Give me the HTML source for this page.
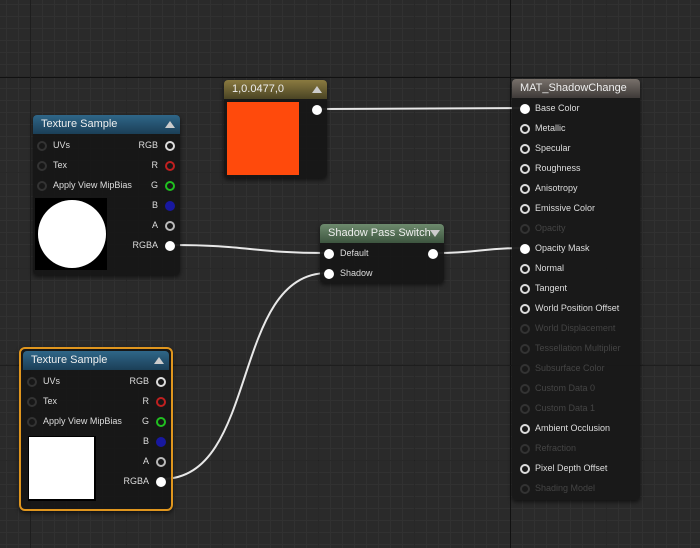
<!DOCTYPE html>
<html><head><style>
body{margin:0;width:700px;height:548px;overflow:hidden;background:#2a2a2a;font-family:"Liberation Sans",sans-serif;position:relative}
.grid{position:absolute;inset:0;background:
linear-gradient(90deg,rgba(0,0,0,.18) 1px,transparent 1px) 30px 0/96px 100%,
linear-gradient(0deg,rgba(0,0,0,.18) 1px,transparent 1px) 0 77px/100% 96px,
linear-gradient(90deg,#313131 1px,transparent 1px) 6px 0/12px 100%,
linear-gradient(0deg,#313131 1px,transparent 1px) 0 5px/100% 12px,#2a2a2a}
.vl{position:absolute;top:0;bottom:0;width:1px;background:#111}
.hl{position:absolute;left:0;right:0;height:1px;background:#111}
.node{position:absolute;background:rgba(22,22,22,.94);border-radius:4px;box-shadow:0 2px 4px rgba(0,0,0,.6)}
.hd{position:absolute;left:0;right:0;top:0;height:19px;border-radius:4px 4px 0 0;color:#eee;font-size:11px;line-height:19px;padding-left:8px}
.tri{position:absolute;right:5px;top:6px;width:0;height:0;border-left:5px solid transparent;border-right:5px solid transparent;border-bottom:7px solid #ccc}
.row{position:absolute;font-size:9px;color:#ddd;line-height:12px;white-space:nowrap}
.dim{color:#444}
.pin{position:absolute;width:6px;height:6px;border-radius:50%;border:2px solid #ddd}
.pf{background:#fff;border-color:#fff}
svg{position:absolute;left:0;top:0}
</style></head><body>
<div class="grid"></div>
<div class="vl" style="left:510px"></div>
<div class="hl" style="top:77px"></div>
<div class="vl" style="left:30px;background:#1e1e1e"></div>
<div class="hl" style="top:365px;background:#1e1e1e"></div>

<svg width="700" height="548"><g fill="none" stroke="#e8e8e8" stroke-width="2">
<path d="M320 109 L522 108"/>
<path d="M172 245 C250 245 250 253 328 253"/>
<path d="M436 253 C480 253 480 248 524 248"/>
<path d="M162 479 C260 479 230 273 328 273"/>
</g></svg>

<div class="node" style="left:33px;top:115px;width:147px;height:160px">
<div class="hd" style="background:linear-gradient(#2f6688,#1b3f57)">Texture Sample</div><div class="tri"></div>
<div class="row" style="left:20px;top:24px">UVs</div>
<div class="row" style="left:20px;top:44px">Tex</div>
<div class="row" style="left:20px;top:64px">Apply View MipBias</div>
<div class="pin" style="left:4px;top:26px;border-color:#333"></div>
<div class="pin" style="left:4px;top:46px;border-color:#333"></div>
<div class="pin" style="left:4px;top:66px;border-color:#333"></div>
<div class="row" style="right:22px;top:24px">RGB</div><div class="pin" style="right:5px;top:26px"></div>
<div class="row" style="right:22px;top:44px">R</div><div class="pin" style="right:5px;top:46px;border-color:#c02020"></div>
<div class="row" style="right:22px;top:64px">G</div><div class="pin" style="right:5px;top:66px;border-color:#20c020"></div>
<div class="row" style="right:22px;top:84px">B</div><div class="pin" style="right:5px;top:86px;border-color:#1818a0;background:#1818a0"></div>
<div class="row" style="right:22px;top:104px">A</div><div class="pin" style="right:5px;top:106px;border-color:#bbb"></div>
<div class="row" style="right:22px;top:124px">RGBA</div><div class="pin pf" style="right:5px;top:126px"></div>
<div style="position:absolute;left:2px;top:83px;width:72px;height:72px;background:#000"><div style="position:absolute;left:3px;top:2px;width:68px;height:68px;border-radius:50%;background:#fff"></div></div>
</div>

<div class="node" style="left:224px;top:80px;width:103px;height:98px">
<div class="hd" style="background:linear-gradient(#8a7a40,#4a4424)">1,0.0477,0</div><div class="tri"></div>
<div style="position:absolute;left:3px;top:22px;width:72px;height:73px;background:#ff4a0c"></div>
<div class="pin pf" style="right:5px;top:25px"></div>
</div>

<div class="node" style="left:320px;top:224px;width:124px;height:59px">
<div class="hd" style="background:linear-gradient(#6d8a6d,#3d553f)">Shadow Pass Switch</div>
<div style="position:absolute;right:4px;top:6px;border-left:5px solid transparent;border-right:5px solid transparent;border-top:7px solid #ccc"></div>
<div class="pin pf" style="left:4px;top:25px"></div><div class="row" style="left:20px;top:23px">Default</div>
<div class="pin pf" style="left:4px;top:45px"></div><div class="row" style="left:20px;top:43px">Shadow</div>
<div class="pin pf" style="right:6px;top:25px"></div>
</div>

<div class="node" style="left:512px;top:79px;width:128px;height:421px;background:rgba(24,24,24,.95)">
<div class="hd" style="background:linear-gradient(#77706a,#3e3a38)">MAT_ShadowChange</div>
<div class="pin pf" style="left:8px;top:25px"></div><div class="row" style="left:23px;top:23px">Base Color</div>
<div class="pin" style="left:8px;top:45px"></div><div class="row" style="left:23px;top:43px">Metallic</div>
<div class="pin" style="left:8px;top:65px"></div><div class="row" style="left:23px;top:63px">Specular</div>
<div class="pin" style="left:8px;top:85px"></div><div class="row" style="left:23px;top:83px">Roughness</div>
<div class="pin" style="left:8px;top:105px"></div><div class="row" style="left:23px;top:103px">Anisotropy</div>
<div class="pin" style="left:8px;top:125px"></div><div class="row" style="left:23px;top:123px">Emissive Color</div>
<div class="pin" style="left:8px;top:145px;border-color:#333"></div><div class="row dim" style="left:23px;top:143px">Opacity</div>
<div class="pin pf" style="left:8px;top:165px"></div><div class="row" style="left:23px;top:163px">Opacity Mask</div>
<div class="pin" style="left:8px;top:185px"></div><div class="row" style="left:23px;top:183px">Normal</div>
<div class="pin" style="left:8px;top:205px"></div><div class="row" style="left:23px;top:203px">Tangent</div>
<div class="pin" style="left:8px;top:225px"></div><div class="row" style="left:23px;top:223px">World Position Offset</div>
<div class="pin" style="left:8px;top:245px;border-color:#333"></div><div class="row dim" style="left:23px;top:243px">World Displacement</div>
<div class="pin" style="left:8px;top:265px;border-color:#333"></div><div class="row dim" style="left:23px;top:263px">Tessellation Multiplier</div>
<div class="pin" style="left:8px;top:285px;border-color:#333"></div><div class="row dim" style="left:23px;top:283px">Subsurface Color</div>
<div class="pin" style="left:8px;top:305px;border-color:#333"></div><div class="row dim" style="left:23px;top:303px">Custom Data 0</div>
<div class="pin" style="left:8px;top:325px;border-color:#333"></div><div class="row dim" style="left:23px;top:323px">Custom Data 1</div>
<div class="pin" style="left:8px;top:345px"></div><div class="row" style="left:23px;top:343px">Ambient Occlusion</div>
<div class="pin" style="left:8px;top:365px;border-color:#333"></div><div class="row dim" style="left:23px;top:363px">Refraction</div>
<div class="pin" style="left:8px;top:385px"></div><div class="row" style="left:23px;top:383px">Pixel Depth Offset</div>
<div class="pin" style="left:8px;top:405px;border-color:#333"></div><div class="row dim" style="left:23px;top:403px">Shading Model</div>
</div>

<div class="node" style="left:19px;top:347px;width:150px;height:160px;border:2px solid #e0961e;border-radius:6px">
<div class="hd" style="left:2px;right:2px;top:2px;background:linear-gradient(#2f6688,#1b3f57)">Texture Sample</div><div class="tri" style="top:8px;right:7px"></div>
<div class="row" style="left:22px;top:26px">UVs</div>
<div class="row" style="left:22px;top:46px">Tex</div>
<div class="row" style="left:22px;top:66px">Apply View MipBias</div>
<div class="pin" style="left:6px;top:28px;border-color:#333"></div>
<div class="pin" style="left:6px;top:48px;border-color:#333"></div>
<div class="pin" style="left:6px;top:68px;border-color:#333"></div>
<div class="row" style="right:22px;top:26px">RGB</div><div class="pin" style="right:5px;top:28px"></div>
<div class="row" style="right:22px;top:46px">R</div><div class="pin" style="right:5px;top:48px;border-color:#c02020"></div>
<div class="row" style="right:22px;top:66px">G</div><div class="pin" style="right:5px;top:68px;border-color:#20c020"></div>
<div class="row" style="right:22px;top:86px">B</div><div class="pin" style="right:5px;top:88px;border-color:#1818a0;background:#1818a0"></div>
<div class="row" style="right:22px;top:106px">A</div><div class="pin" style="right:5px;top:108px;border-color:#bbb"></div>
<div class="row" style="right:22px;top:126px">RGBA</div><div class="pin pf" style="right:5px;top:128px"></div>
<div style="position:absolute;left:7px;top:87px;width:68px;height:65px;background:#000"><div style="position:absolute;left:1px;top:1px;width:65px;height:62px;background:#fff"></div></div>
</div>
</body></html>
